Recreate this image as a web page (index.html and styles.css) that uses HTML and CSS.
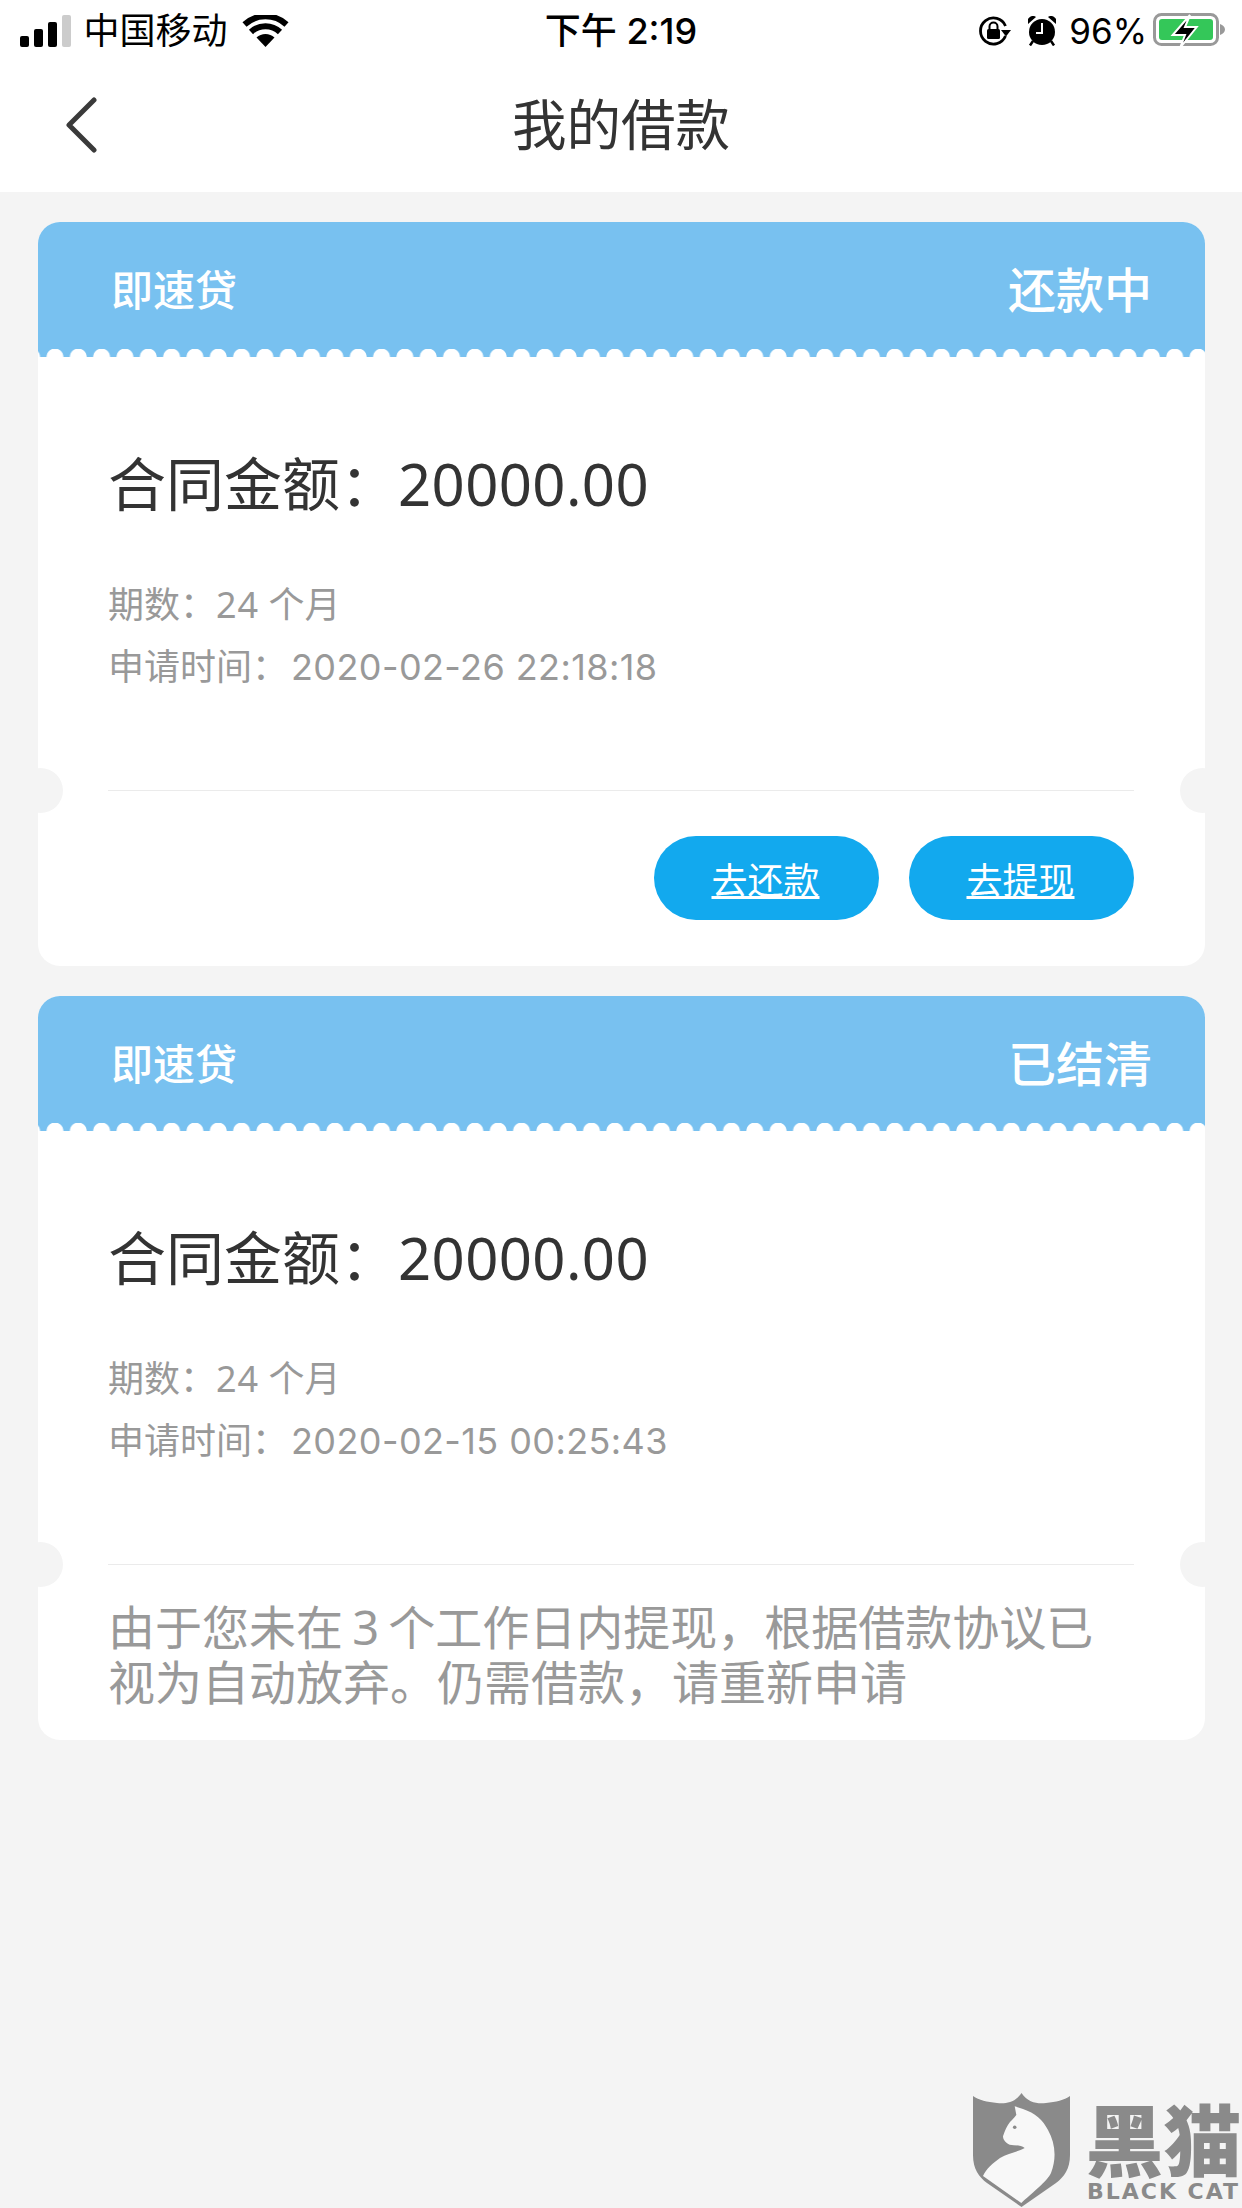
FILE: index.html
```html
<!DOCTYPE html>
<html lang="zh-CN">
<head>
  <meta charset="utf-8">
  <title>我的借款</title>
  <link rel="stylesheet" href="styles.css">
</head>
<body>
  <div class="statusbar">
    <div class="status-left">
      <div class="signal">
        <i class="bar1"></i><i class="bar2"></i><i class="bar3"></i><i class="bar4"></i>
      </div>
      <span class="carrier">中国移动</span>
      <svg class="wifi" width="47" height="32" viewBox="0 0 47 32">
        <path d="M23.500 32L14.500 22.500a13 13 0 0 1 18 0z" fill="#000"/>
        <path d="M9 17a21 21 0 0 1 29 0" fill="none" stroke="#000" stroke-width="6"/>
        <path d="M2.500 9.500a31 31 0 0 1 42 0" fill="none" stroke="#000" stroke-width="6"/>
      </svg>
    </div>
    <div class="status-time">下午 2:19</div>
    <div class="status-right">
      <svg class="lock" width="33" height="30" viewBox="0 0 33 30">
        <path d="M27.500 20A13 13 0 1 1 27.500 10" fill="none" stroke="#000" stroke-width="2.800"/>
        <path d="M23 14h10l-5 6.500z" fill="#000"/>
        <rect x="9" y="13" width="13" height="10" rx="1.500" fill="#000"/>
        <path d="M11.500 13V10.500a4 4 0 0 1 8 0V13" fill="none" stroke="#000" stroke-width="2"/>
      </svg>
      <svg class="alarm" width="28" height="30" viewBox="0 0 28 30">
        <circle cx="14" cy="16" r="13" fill="#000"/>
        <path d="M0 8a5.500 5.500 0 0 1 8-7zM28 8a5.500 5.500 0 0 0-8-7z" fill="#000"/>
        <path d="M5 25l-3 4.500M23 25l3 4.500" stroke="#000" stroke-width="2.500"/>
        <path d="M14 7v10H8" fill="none" stroke="#fff" stroke-width="2"/>
      </svg>
      <span class="percent">96%</span>
      <svg class="battery" width="73" height="36" viewBox="0 0 73 36">
        <rect x="1.500" y="1.500" width="63" height="30" rx="7" fill="none" stroke="#999" stroke-width="3"/>
        <path d="M67 11c3 1 5 3 5 5.500s-2 4.500-5 5.500z" fill="#999"/>
        <rect x="6" y="6" width="54" height="21" rx="3" fill="#34c759"/>
        <path d="M37 2L19.700 22H32L27 35 43.700 14H32z" fill="#000" stroke="#fff" stroke-width="2"/>
      </svg>
    </div>
  </div>

  <div class="navbar">
    <svg class="back" width="32" height="56" viewBox="0 0 32 56">
      <path d="M29 3L4 28l25 25" fill="none" stroke="#3a3a3a" stroke-width="5" stroke-linecap="round" stroke-linejoin="round"/>
    </svg>
    <h1 class="nav-title">我的借款</h1>
  </div>

  <div class="loan-list">
    <div class="card">
      <div class="card-head">
        <span class="product">即速贷</span>
        <span class="state">还款中</span>
      </div>
      <div class="card-body">
        <div class="amount">合同金额：<span class="money">20000.00</span></div>
        <div class="detail">期数：<span class="term">24</span> 个月</div>
        <div class="detail">申请时间：<span class="date">2020-02-26 22:18:18</span></div>
      </div>
      <div class="card-foot">
        <div class="actions">
          <a class="btn" href="#">去还款</a>
          <a class="btn" href="#">去提现</a>
        </div>
      </div>
    </div>

    <div class="card">
      <div class="card-head">
        <span class="product">即速贷</span>
        <span class="state">已结清</span>
      </div>
      <div class="card-body">
        <div class="amount">合同金额：<span class="money">20000.00</span></div>
        <div class="detail">期数：<span class="term">24</span> 个月</div>
        <div class="detail">申请时间：<span class="date">2020-02-15 00:25:43</span></div>
      </div>
      <div class="card-foot">
        <p class="notice">由于您未在 3 个工作日内提现，根据借款协议已视为自动放弃。仍需借款，请重新申请</p>
      </div>
    </div>
  </div>

  <div class="watermark">
    <svg class="shield" width="97" height="114" viewBox="0 0 97 114">
      <path d="M48.500 0C42 10 32 11 24 10 14 9 6 7 0 3V62C0 76 6 84 14 90L48.500 114 83 90C91 84 97 76 97 62V3C91 7 83 9 73 10 65 11 55 10 48.500 0Z" fill="#8a8a8a"/>
      <path d="M41.700 13.300L50 16C62 20 70 27 75 37 82 50 84 64 78 80 74 88 66 94 48.300 110L10 83C13 76 20 70 27 65 35 60 45 59 51.700 55 48 52 42 52.500 36.700 51.700 33 50 30 47 30 43.300 32 37 34 33 37 29 41 25 44 21 43.300 21.700Z" fill="#f8f8f8"/>
      <circle cx="41.700" cy="34.300" r="1.800" fill="#8a8a8a"/>
    </svg>
    <div class="wm-text">
      <div class="wm-cn">黑猫</div>
      <div class="wm-en">BLACK CAT</div>
    </div>
  </div>
</body>
</html>
```

FILE: styles.css
```css
* {
  box-sizing: border-box;
}

html,
body {
  margin: 0;
  padding: 0;
}

body {
  position: relative;
  width: 1242px;
  height: 2208px;
  overflow: hidden;
  background-color: #f4f4f4;
  font-family: "Noto Sans", "Noto Sans CJK SC", sans-serif;
  color: #333333;
}

/* status bar */
.statusbar {
  display: grid;
  grid-template-columns: 1fr auto 1fr;
  align-items: center;
  height: 62px;
  padding: 0 16px 0 20px;
  background-color: #ffffff;
  color: #000000;
  font-family: "Inter", "Noto Sans CJK SC", sans-serif;
  font-size: 36px;
}

.status-left {
  display: flex;
  align-items: center;
}

.signal {
  display: flex;
  align-items: flex-end;
  gap: 5.5px;
  height: 32px;
}

.signal i {
  display: block;
  width: 8.5px;
  border-radius: 2px;
  background-color: #000000;
}

.signal .bar1 {
  height: 11px;
}

.signal .bar2 {
  height: 18px;
}

.signal .bar3 {
  height: 25px;
}

.signal .bar4 {
  height: 32px;
  background-color: #cccccc;
}

.carrier {
  margin-left: 13px;
  line-height: 1;
}

.wifi {
  margin-left: 14px;
}

.status-time {
  position: relative;
  left: -2px;
  line-height: 1;
  font-weight: 500;
}

.status-right {
  display: flex;
  align-items: center;
  justify-content: flex-end;
}

.alarm {
  margin-left: 17px;
}

.percent {
  margin-left: 13px;
  font-size: 35px;
  line-height: 1;
}

.battery {
  margin-left: 6px;
}

/* nav */
.navbar {
  display: flex;
  align-items: center;
  justify-content: center;
  position: relative;
  height: 130px;
  padding-bottom: 6px;
  background-color: #ffffff;
}

.back {
  position: absolute;
  left: 65px;
  top: 35px;
}

.nav-title {
  margin: 0;
  font-size: 54.5px;
  font-weight: 400;
  line-height: 1;
  color: #333333;
}

/* loan cards */
.loan-list {
  display: flex;
  flex-direction: column;
  gap: 30px;
  padding: 30px 37px 0 38px;
}

.card {
  border-radius: 22px;
  overflow: hidden;
  background-color: #ffffff;
}

.card-head {
  display: flex;
  align-items: center;
  justify-content: space-between;
  position: relative;
  height: 135px;
  padding: 0 53px 0 73px;
  background-color: #78c1f0;
  color: #ffffff;
}

/* scalloped edge */
.card-head::after {
  content: "";
  position: absolute;
  left: 0;
  right: 0;
  bottom: 0;
  height: 8px;
  background-image: radial-gradient(circle at 50% 100%, #ffffff 8px, rgba(255, 255, 255, 0) 8.8px);
  background-size: 23.33px 8px;
  background-position: 5.3px 0;
  background-repeat: repeat-x;
}

.product {
  font-size: 42px;
  font-weight: 500;
  line-height: 1;
}

.state {
  font-size: 48px;
  font-weight: 500;
  line-height: 1;
}

.card-body {
  height: 433px;
  padding: 91px 70px 0;
}

.amount {
  font-size: 58px;
  line-height: 72px;
  margin-bottom: 54px;
  white-space: nowrap;
}

.money {
  letter-spacing: 0.4px;
}

.detail {
  font-size: 36px;
  line-height: 62px;
  color: #999999;
  white-space: nowrap;
}

.term {
  letter-spacing: 1px;
}

.date {
  margin-left: 3px;
  font-family: "Inter", "Noto Sans", sans-serif;
  letter-spacing: 0.4px;
}

.card-foot {
  position: relative;
  margin: 0 71px 0 70px;
  border-top: 1px solid #ebebeb;
}

/* ticket notches */
.card-foot::before,
.card-foot::after {
  content: "";
  position: absolute;
  top: -23px;
  width: 45px;
  height: 45px;
  border-radius: 50%;
  background-color: #f4f4f4;
}

.card-foot::before {
  left: -90px;
}

.card-foot::after {
  right: -91px;
}

.actions {
  display: flex;
  justify-content: flex-end;
  gap: 30px;
  padding: 45px 0 46px;
}

.btn {
  display: flex;
  align-items: center;
  justify-content: center;
  width: 225px;
  height: 84px;
  padding-right: 2px;
  border-radius: 42px;
  background-color: #12a9ee;
  color: #ffffff;
  font-size: 36px;
}

.notice {
  margin: 0;
  padding: 35px 0 30px;
  font-size: 47px;
  line-height: 55px;
  word-spacing: -3px;
  color: #999999;
}

/* watermark */
.watermark {
  position: absolute;
  right: 3px;
  bottom: 1px;
  display: flex;
  align-items: flex-end;
  gap: 18px;
  color: #8a8a8a;
}

.wm-text {
  display: flex;
  flex-direction: column;
  align-items: center;
  width: 151px;
  margin-bottom: 4px;
}

.wm-cn {
  font-family: "Noto Sans CJK SC", sans-serif;
  font-size: 78px;
  font-weight: 900;
  line-height: 66px;
  white-space: nowrap;
}

.wm-en {
  margin-top: 11px;
  font-family: "DejaVu Sans", sans-serif;
  font-size: 22px;
  font-weight: 700;
  line-height: 22px;
  letter-spacing: 2px;
  white-space: nowrap;
}
```
